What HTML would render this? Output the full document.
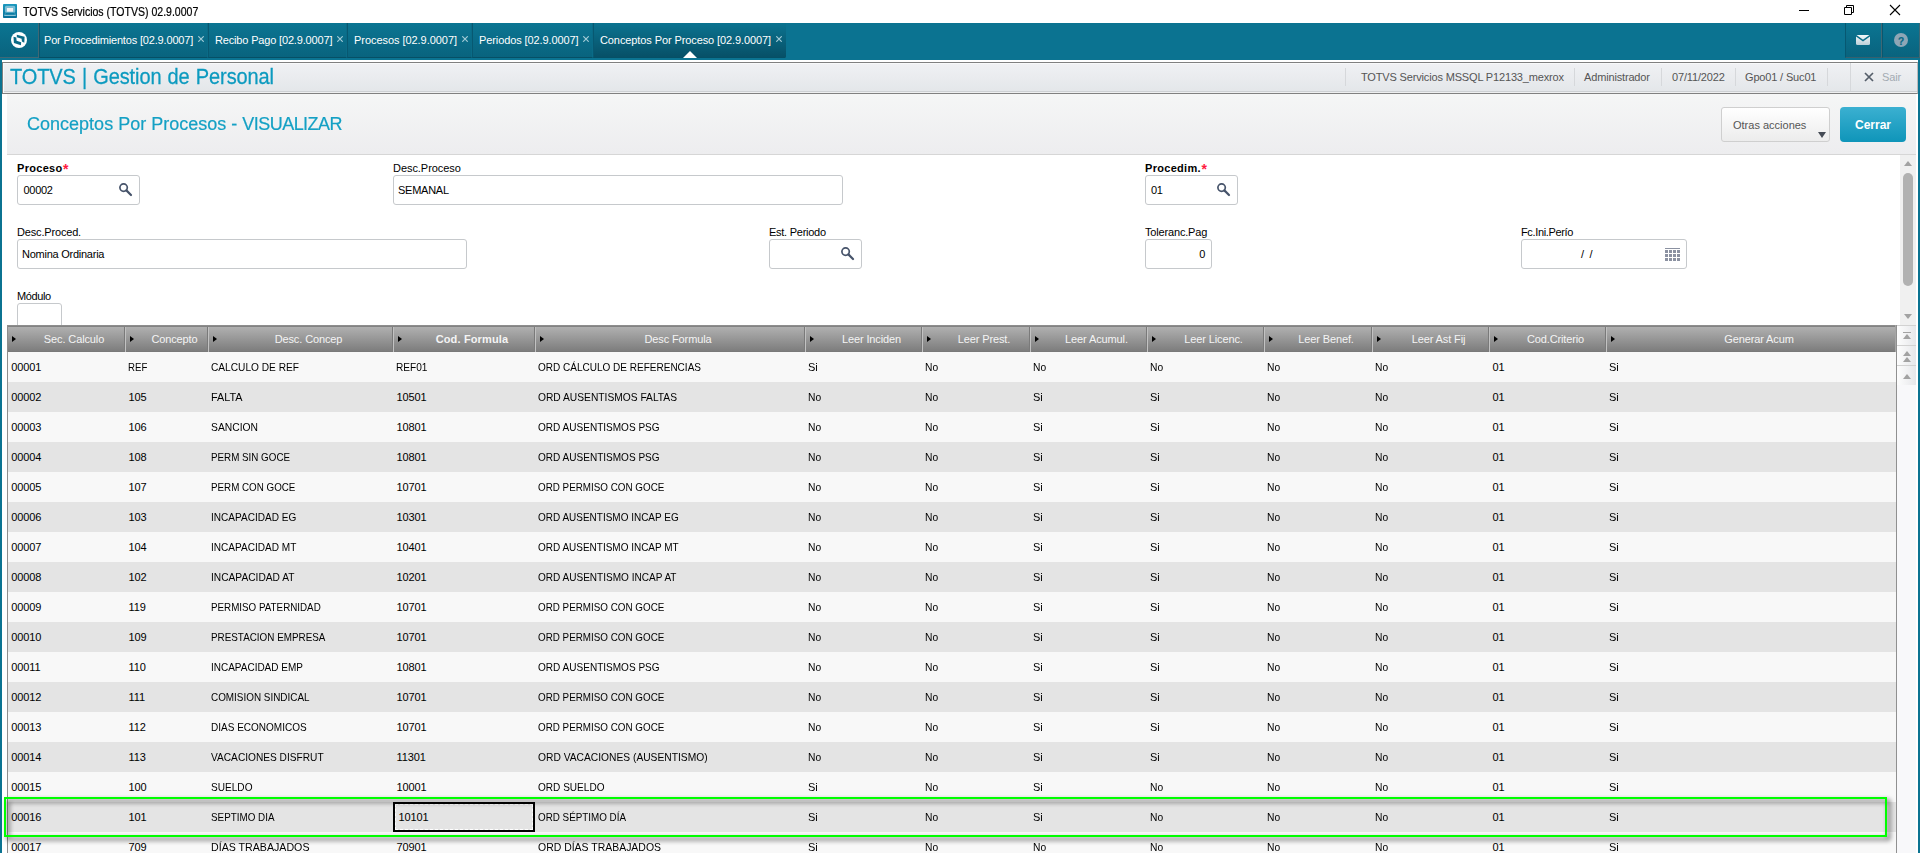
<!DOCTYPE html>
<html><head><meta charset="utf-8"><title>TOTVS</title>
<style>
*{box-sizing:border-box;margin:0;padding:0}
html,body{width:1920px;height:853px;overflow:hidden;background:#fff;font-family:"Liberation Sans",sans-serif;font-size:11px;color:#000}
div,span,i,svg{position:absolute}
#wt{left:23px;top:4px;-webkit-text-stroke:0.2px #000;font-size:12.3px;transform:scaleX(0.857);transform-origin:0 0;line-height:16px;white-space:pre}
#teal{left:0;top:23px;width:1920px;height:830px;background:#0b7391}
#main{left:2px;top:60px;width:1916px;height:793px;background:#fff}
.tab{top:23px;height:35px;background:linear-gradient(#0b7592,#09637e);border-left:1px solid #075871;border-right:1px solid #0a6b87;border-bottom:1px solid #064f65;color:#fff;font-size:11px;line-height:34px;white-space:pre}
.tab span{position:absolute;top:0;letter-spacing:-0.1px}
.tab b{position:absolute;font-weight:normal;color:#a9cdd8;font-size:11px;top:-1px}
.tab.act{background:linear-gradient(#0b7390,#075067);border-right-color:transparent}
#hdr{left:2px;top:62px;width:1916px;height:32px;border:1px solid #808080;border-right-color:#bbb;background:linear-gradient(#f0f1f4,#e3e6e9);box-shadow:inset 1px 1px 0 #f8f9fa}
#hdr:after{content:'';position:absolute;left:1px;right:0;bottom:0;height:2px;background:linear-gradient(#cdd0d3 50%,#eeeff0 50%)}
#hdr .t{left:7px;top:2px;-webkit-text-stroke:0.25px #0c9abf;font-size:20px;line-height:24px;color:#0c9abf;white-space:pre;transform:scaleY(1.07);transform-origin:0 19.5px}
.hs{top:5px;width:1px;height:18px;background:#d6d8db}
.ht{top:8px;font-size:11px;line-height:13px;color:#555;white-space:pre;letter-spacing:-0.16px}
#panel{left:7px;top:94px;width:1909px;height:61px;background:linear-gradient(#f5f6f6,#ededef);border-bottom:1px solid #d6d6d6}
#panel .t{left:20px;top:19px;-webkit-text-stroke:0.2px #14a0c4;font-size:18px;line-height:22px;color:#14a0c4;white-space:pre;letter-spacing:-0.15px;transform:scaleY(1.05);transform-origin:0 17.5px}
#oa{left:1714px;top:13px;width:109px;height:35px;border:1px solid #cfcfcf;border-radius:3px;background:linear-gradient(#fff,#ececec);font-size:11px;color:#555;line-height:33px}
#oa span{left:11px;top:1px}
#oa i{left:96px;top:24px;width:0;height:0;border-left:4.75px solid transparent;border-right:4.75px solid transparent;border-top:6px solid #454b55}
#ce{left:1833px;top:13px;width:66px;height:35px;border-radius:4px;background:linear-gradient(#3bb0d1,#0f95b9);color:#fff;font-weight:bold;font-size:12px;line-height:37px;text-align:center}
.lb{font-size:11px;line-height:13px;white-space:pre;color:#000;letter-spacing:-0.17px}
.lb.b{font-weight:bold;letter-spacing:0.3px}
.lb em{font-style:normal;color:#ff1a40;font-weight:bold;font-size:14px;line-height:0;vertical-align:-1.5px;letter-spacing:0;margin-left:0.5px}
.in{height:30px;border:1px solid #c6c9cc;border-radius:3px;background:#fff;font-size:11px;line-height:28px;white-space:pre}
.in span{top:0;letter-spacing:-0.25px}
#sb{left:1900px;top:155px;width:16px;height:170px;background:#f0f0f0}
#sb .th{left:3px;top:18px;width:10px;height:113px;border-radius:5px;background:#b1b1b1}
.tu{width:0;height:0;border-left:4px solid transparent;border-right:4px solid transparent;border-bottom:5px solid #a2a2a2}
.td{width:0;height:0;border-left:4px solid transparent;border-right:4px solid transparent;border-top:5px solid #a2a2a2}
#grid{left:7px;top:325px;width:1890px;height:528px;border-left:1px solid #8e8e8e;border-right:1px solid #909090;background:#f8f8f8;overflow:hidden}
#gh{left:-1px;top:0;width:1889px;height:27px;border-right:1px solid #a6a6a6;background:linear-gradient(#999 0,#828282 1px,#828282 2px,#b0b0b0 2px,#7d7d7d 26px,#777 27px)}
.hc{top:2px;height:25px;border-left:1px solid #c2c2c2;color:#f4f4f4;font-size:11px;line-height:24px;text-align:center;white-space:pre}
.hc:before{content:"";position:absolute;left:-2px;top:0;width:1px;height:25px;background:#7a7a7a}
.hc i{left:4px;top:9.4px;width:0;height:0;border-top:3.7px solid transparent;border-bottom:3.7px solid transparent;border-left:4.5px solid #000}
.hc span{left:15px;right:0;top:0;letter-spacing:-0.12px}
.hc.b span{font-weight:bold;letter-spacing:0.15px}
.gr{left:-1px;width:1890px;height:30px;background:#f8f8f8;line-height:30px;white-space:pre}
.gr.alt{background:#e4e4e4}
.gr span{top:0;font-size:11px}
.gr .d{letter-spacing:-0.1px}
.gr .u{transform-origin:0 0}
#rb{left:1897px;top:325px;width:19px;height:528px;background:#f8f8fa}
.rbb{left:0;width:19px;background:linear-gradient(90deg,#fdfdfd,#e6e7ea);border-top:1px solid #d2d2d2}
</style></head><body>
<!-- window title bar -->
<svg style="left:3px;top:4px" width="14" height="14" viewBox="0 0 14 14"><defs><linearGradient id="ig" x1="0" y1="0" x2="0" y2="1"><stop offset="0" stop-color="#1a98be"/><stop offset="1" stop-color="#066f98"/></linearGradient></defs><rect x="0" y="0" width="14" height="14" rx="0.8" fill="url(#ig)"/><rect x="2.4" y="2.3" width="9.4" height="6" rx="0.9" fill="#79bdd5" stroke="#9fd0e0" stroke-width="0.6"/><rect x="3.9" y="4" width="6.2" height="3.7" fill="#f1f1f3"/><path d="M2.7 8.4 L11.5 8.4 L12.6 11.3 L1.5 11.3 Z" fill="#0b7da5" stroke="#6fb9d1" stroke-width="0.45" stroke-linejoin="round"/><path d="M1.4 11.4 H12.7" stroke="#b6dbe6" stroke-width="0.8"/></svg>
<div id="wt">TOTVS Servicios (TOTVS) 02.9.0007</div>
<svg style="left:1790px;top:0" width="130" height="23" viewBox="0 0 130 23"><path d="M9 10.5 H19" stroke="#000" stroke-width="1" fill="none"/><path d="M54.5 7.5 H61.5 V14.5 H54.5 Z M56.5 7.5 V5.5 H63.5 V12.5 H61.5" stroke="#000" stroke-width="1" fill="none"/><path d="M100 5 L110 15 M110 5 L100 15" stroke="#000" stroke-width="1.1" fill="none"/></svg>
<div id="teal"></div>
<!-- tabs -->
<div class="tab" style="left:0;width:39px;border-left:none;border-right-color:#3f6875;border-bottom-color:#3f6875"><svg style="left:11px;top:9px" width="16" height="16" viewBox="0 0 16 16"><circle cx="8" cy="8" r="8" fill="#fff"/><path d="M5.8 2.7 L13.6 4.7 L13.3 10.8 L10.9 9.6 L10.6 6.7 L5.8 5.3 Z M2.5 4.8 L5.3 5.6 L5.6 8.8 L10.2 10.3 L9.9 13.3 L2.9 10.9 Z" fill="#0a6b87"/></svg></div>
<div class="tab" style="left:39px;width:169px"><span style="left:4px;letter-spacing:-0.165px">Por Procedimientos [02.9.0007]</span><svg style="left:158px;top:13px" width="6" height="6" viewBox="0 0 6 6"><path d="M0.3 0.3 L5.7 5.7 M5.7 0.3 L0.3 5.7" stroke="#a4ccd7" stroke-width="1.15" fill="none"/></svg></div>
<div class="tab" style="left:208px;width:139px"><span style="left:6px;letter-spacing:-0.165px">Recibo Pago [02.9.0007]</span><svg style="left:128px;top:13px" width="6" height="6" viewBox="0 0 6 6"><path d="M0.3 0.3 L5.7 5.7 M5.7 0.3 L0.3 5.7" stroke="#a4ccd7" stroke-width="1.15" fill="none"/></svg></div>
<div class="tab" style="left:347px;width:125px"><span style="left:6px;letter-spacing:-0.05px">Procesos [02.9.0007]</span><svg style="left:114px;top:13px" width="6" height="6" viewBox="0 0 6 6"><path d="M0.3 0.3 L5.7 5.7 M5.7 0.3 L0.3 5.7" stroke="#a4ccd7" stroke-width="1.15" fill="none"/></svg></div>
<div class="tab" style="left:472px;width:121px"><span style="left:6px">Periodos [02.9.0007]</span><svg style="left:110px;top:13px" width="6" height="6" viewBox="0 0 6 6"><path d="M0.3 0.3 L5.7 5.7 M5.7 0.3 L0.3 5.7" stroke="#a4ccd7" stroke-width="1.15" fill="none"/></svg></div>
<div class="tab act" style="left:593px;width:193px"><span style="left:6px">Conceptos Por Proceso [02.9.0007]</span><svg style="left:182px;top:13px" width="6" height="6" viewBox="0 0 6 6"><path d="M0.3 0.3 L5.7 5.7 M5.7 0.3 L0.3 5.7" stroke="#a4ccd7" stroke-width="1.15" fill="none"/></svg><i style="left:89px;top:28px;width:0;height:0;border-left:7px solid transparent;border-right:7px solid transparent;border-bottom:7px solid #fff"></i></div>
<div class="tab" style="left:1845px;width:37px;border-right-color:#3f6875;border-bottom-color:#36606d"><svg style="left:10px;top:12px" width="14" height="10" viewBox="0 0 14 10"><defs><linearGradient id="mg" x1="0" y1="0" x2="0" y2="1"><stop offset="0" stop-color="#f4f7f9"/><stop offset="1" stop-color="#bccfd8"/></linearGradient></defs><rect x="0" y="0" width="14" height="10" rx="1.5" fill="url(#mg)"/><path d="M0 0.6 L7 5.5 L14 0.6" fill="none" stroke="#0a6c88" stroke-width="1.5"/></svg></div>
<div class="tab" style="left:1882px;width:38px;border-right-color:#3f6875;border-bottom-color:#36606d"><svg style="left:11px;top:10px" width="14" height="14" viewBox="0 0 14 14"><circle cx="7" cy="7" r="7" fill="#8ea6b6"/><text x="7" y="11.9" text-anchor="middle" font-family="Liberation Sans" font-weight="bold" font-size="11.5" fill="#0a6985" stroke="#0a6985" stroke-width="0.2" transform="translate(7 0) scale(0.88 1) translate(-7 0)">?</text></svg></div>
<!-- main -->
<div id="main"></div>
<div id="hdr"><div class="t" style="word-spacing:0.7px;letter-spacing:-0.1px">TOTVS | Gestion de Personal</div>
<div class="hs" style="left:1342px"></div><div class="ht" style="left:1358px">TOTVS Servicios MSSQL P12133_mexrox</div>
<div class="hs" style="left:1571px"></div><div class="ht" style="left:1581px">Administrador</div>
<div class="hs" style="left:1658px"></div><div class="ht" style="left:1669px">07/11/2022</div>
<div class="hs" style="left:1732px"></div><div class="ht" style="left:1742px">Gpo01 / Suc01</div>
<div class="hs" style="left:1824px"></div>
<div class="hs" style="left:1847px;top:0;height:29px"></div>
<svg style="left:1861px;top:8.5px" width="10" height="10" viewBox="0 0 10 10"><path d="M1 1 L9 9 M9 1 L1 9" stroke="#555e6a" stroke-width="1.7" fill="none"/></svg>
<div class="ht" style="left:1879px;color:#a3abb3">Sair</div>
</div>
<div id="panel"><div class="t" style="letter-spacing:0.01px">Conceptos Por Procesos - <span style="position:static;letter-spacing:-0.55px">VISUALIZAR</span></div>
<div id="oa"><span>Otras acciones</span><i></i></div><div id="ce">Cerrar</div></div>
<!-- form -->
<div class="lb b" style="left:17px;top:162px">Proceso<em>*</em></div>
<div class="in" style="left:17px;top:175px;width:123px"><span style="left:5.4px">00002</span><svg class="mag" style="left:100px;top:5.5px" width="15" height="15" viewBox="0 0 15 15"><circle cx="5.6" cy="5.6" r="3.7" fill="none" stroke="#46536a" stroke-width="1.7"/><path d="M8.4 8.4 L13 13" stroke="#46536a" stroke-width="2.2" stroke-linecap="round"/></svg></div>
<div class="lb" style="left:393px;top:162px;letter-spacing:-0.05px">Desc.Proceso</div>
<div class="in" style="left:393px;top:175px;width:450px"><span style="left:4px">SEMANAL</span></div>
<div class="lb b" style="left:1145px;top:162px">Procedim.<em>*</em></div>
<div class="in" style="left:1145px;top:175px;width:93px"><span style="left:5px">01</span><svg class="mag" style="left:70.3px;top:5.5px" width="15" height="15" viewBox="0 0 15 15"><circle cx="5.6" cy="5.6" r="3.7" fill="none" stroke="#46536a" stroke-width="1.7"/><path d="M8.4 8.4 L13 13" stroke="#46536a" stroke-width="2.2" stroke-linecap="round"/></svg></div>
<div class="lb" style="left:17px;top:226px">Desc.Proced.</div>
<div class="in" style="left:17px;top:239px;width:450px"><span style="left:4px">Nomina Ordinaria</span></div>
<div class="lb" style="left:769px;top:226px;letter-spacing:-0.26px">Est. Periodo</div>
<div class="in" style="left:769px;top:239px;width:93px"><svg class="mag" style="left:70.3px;top:5.5px" width="15" height="15" viewBox="0 0 15 15"><circle cx="5.6" cy="5.6" r="3.7" fill="none" stroke="#46536a" stroke-width="1.7"/><path d="M8.4 8.4 L13 13" stroke="#46536a" stroke-width="2.2" stroke-linecap="round"/></svg></div>
<div class="lb" style="left:1145px;top:226px">Toleranc.Pag</div>
<div class="in" style="left:1145px;top:239px;width:67px"><span style="right:6px">0</span></div>
<div class="lb" style="left:1521px;top:226px;letter-spacing:-0.36px">Fc.Ini.Perío</div>
<div class="in" style="left:1521px;top:239px;width:166px"><span style="left:59px">/  /</span><svg style="left:143px;top:8px" width="16" height="14" viewBox="0 0 16 14"><g fill="#8b91a1"><rect x="0" y="0" width="15" height="1"/><rect x="0" y="2" width="3" height="3"/><rect x="4" y="2" width="3" height="3"/><rect x="8" y="2" width="3" height="3"/><rect x="12" y="2" width="3" height="3"/><rect x="0" y="6" width="3" height="3"/><rect x="4" y="6" width="3" height="3"/><rect x="8" y="6" width="3" height="3"/><rect x="12" y="6" width="3" height="3"/><rect x="0" y="10" width="3" height="3"/><rect x="4" y="10" width="3" height="3"/><rect x="8" y="10" width="3" height="3"/><rect x="12" y="10" width="3" height="3"/></g></svg></div>
<div class="lb" style="left:17px;top:290px;letter-spacing:-0.4px">Módulo</div>
<div class="in" style="left:17px;top:303px;width:45px"></div>
<!-- form scrollbar -->
<div id="sb"><i class="tu" style="left:4px;top:6px"></i><div class="th"></div><i class="td" style="left:4px;top:159px"></i></div>
<!-- grid -->
<div id="grid"><div id="gh">
<div class="hc" style="left:0px;width:118px"><i></i><span>Sec. Calculo</span></div>
<div class="hc" style="left:118px;width:83px"><i></i><span>Concepto</span></div>
<div class="hc" style="left:201px;width:185px"><i></i><span>Desc. Concep</span></div>
<div class="hc b" style="left:386px;width:142px"><i></i><span>Cod. Formula</span></div>
<div class="hc" style="left:528px;width:270px"><i></i><span>Desc Formula</span></div>
<div class="hc" style="left:798px;width:117px"><i></i><span>Leer Inciden</span></div>
<div class="hc" style="left:915px;width:108px"><i></i><span>Leer Prest.</span></div>
<div class="hc" style="left:1023px;width:117px"><i></i><span>Leer Acumul.</span></div>
<div class="hc" style="left:1140px;width:117px"><i></i><span>Leer Licenc.</span></div>
<div class="hc" style="left:1257px;width:108px"><i></i><span>Leer Benef.</span></div>
<div class="hc" style="left:1365px;width:117px"><i></i><span>Leer Ast Fij</span></div>
<div class="hc" style="left:1482px;width:117px"><i></i><span>Cod.Criterio</span></div>
<div class="hc" style="left:1599px;width:290px"><i></i><span>Generar Acum</span></div>
</div>
<div class="gr" style="top:27px"><span class="d" style="left:4.2px">00001</span><span class="u" style="left:121px;transform:scaleX(0.8773)">REF</span><span class="u" style="left:204px;transform:scaleX(0.9228)">CALCULO DE REF</span><span class="u" style="left:389px;transform:scaleX(0.9197)">REF01</span><span class="u" style="left:531px;transform:scaleX(0.9101)">ORD CÁLCULO DE REFERENCIAS</span><span class="u" style="left:801px;transform:scaleX(1.0019)">Si</span><span class="u" style="left:918px;transform:scaleX(0.9316)">No</span><span class="u" style="left:1026px;transform:scaleX(0.9316)">No</span><span class="u" style="left:1143px;transform:scaleX(0.9316)">No</span><span class="u" style="left:1260px;transform:scaleX(0.9316)">No</span><span class="u" style="left:1368px;transform:scaleX(0.9316)">No</span><span class="d" style="left:1485.5px">01</span><span class="u" style="left:1602px;transform:scaleX(1.0019)">Si</span></div>
<div class="gr alt" style="top:57px"><span class="d" style="left:4.2px">00002</span><span class="d" style="left:121.5px">105</span><span class="u" style="left:204px;transform:scaleX(0.9844)">FALTA</span><span class="d" style="left:389.5px">10501</span><span class="u" style="left:531px;transform:scaleX(0.9307)">ORD AUSENTISMOS FALTAS</span><span class="u" style="left:801px;transform:scaleX(0.9316)">No</span><span class="u" style="left:918px;transform:scaleX(0.9316)">No</span><span class="u" style="left:1026px;transform:scaleX(1.0019)">Si</span><span class="u" style="left:1143px;transform:scaleX(1.0019)">Si</span><span class="u" style="left:1260px;transform:scaleX(0.9316)">No</span><span class="u" style="left:1368px;transform:scaleX(0.9316)">No</span><span class="d" style="left:1485.5px">01</span><span class="u" style="left:1602px;transform:scaleX(1.0019)">Si</span></div>
<div class="gr" style="top:87px"><span class="d" style="left:4.2px">00003</span><span class="d" style="left:121.5px">106</span><span class="u" style="left:204px;transform:scaleX(0.9377)">SANCION</span><span class="d" style="left:389.5px">10801</span><span class="u" style="left:531px;transform:scaleX(0.9126)">ORD AUSENTISMOS PSG</span><span class="u" style="left:801px;transform:scaleX(0.9316)">No</span><span class="u" style="left:918px;transform:scaleX(0.9316)">No</span><span class="u" style="left:1026px;transform:scaleX(1.0019)">Si</span><span class="u" style="left:1143px;transform:scaleX(1.0019)">Si</span><span class="u" style="left:1260px;transform:scaleX(0.9316)">No</span><span class="u" style="left:1368px;transform:scaleX(0.9316)">No</span><span class="d" style="left:1485.5px">01</span><span class="u" style="left:1602px;transform:scaleX(1.0019)">Si</span></div>
<div class="gr alt" style="top:117px"><span class="d" style="left:4.2px">00004</span><span class="d" style="left:121.5px">108</span><span class="u" style="left:204px;transform:scaleX(0.8914)">PERM SIN GOCE</span><span class="d" style="left:389.5px">10801</span><span class="u" style="left:531px;transform:scaleX(0.9126)">ORD AUSENTISMOS PSG</span><span class="u" style="left:801px;transform:scaleX(0.9316)">No</span><span class="u" style="left:918px;transform:scaleX(0.9316)">No</span><span class="u" style="left:1026px;transform:scaleX(1.0019)">Si</span><span class="u" style="left:1143px;transform:scaleX(1.0019)">Si</span><span class="u" style="left:1260px;transform:scaleX(0.9316)">No</span><span class="u" style="left:1368px;transform:scaleX(0.9316)">No</span><span class="d" style="left:1485.5px">01</span><span class="u" style="left:1602px;transform:scaleX(1.0019)">Si</span></div>
<div class="gr" style="top:147px"><span class="d" style="left:4.2px">00005</span><span class="d" style="left:121.5px">107</span><span class="u" style="left:204px;transform:scaleX(0.8909)">PERM CON GOCE</span><span class="d" style="left:389.5px">10701</span><span class="u" style="left:531px;transform:scaleX(0.8946)">ORD PERMISO CON GOCE</span><span class="u" style="left:801px;transform:scaleX(0.9316)">No</span><span class="u" style="left:918px;transform:scaleX(0.9316)">No</span><span class="u" style="left:1026px;transform:scaleX(1.0019)">Si</span><span class="u" style="left:1143px;transform:scaleX(1.0019)">Si</span><span class="u" style="left:1260px;transform:scaleX(0.9316)">No</span><span class="u" style="left:1368px;transform:scaleX(0.9316)">No</span><span class="d" style="left:1485.5px">01</span><span class="u" style="left:1602px;transform:scaleX(1.0019)">Si</span></div>
<div class="gr alt" style="top:177px"><span class="d" style="left:4.2px">00006</span><span class="d" style="left:121.5px">103</span><span class="u" style="left:204px;transform:scaleX(0.9152)">INCAPACIDAD EG</span><span class="d" style="left:389.5px">10301</span><span class="u" style="left:531px;transform:scaleX(0.9074)">ORD AUSENTISMO INCAP EG</span><span class="u" style="left:801px;transform:scaleX(0.9316)">No</span><span class="u" style="left:918px;transform:scaleX(0.9316)">No</span><span class="u" style="left:1026px;transform:scaleX(1.0019)">Si</span><span class="u" style="left:1143px;transform:scaleX(1.0019)">Si</span><span class="u" style="left:1260px;transform:scaleX(0.9316)">No</span><span class="u" style="left:1368px;transform:scaleX(0.9316)">No</span><span class="d" style="left:1485.5px">01</span><span class="u" style="left:1602px;transform:scaleX(1.0019)">Si</span></div>
<div class="gr" style="top:207px"><span class="d" style="left:4.2px">00007</span><span class="d" style="left:121.5px">104</span><span class="u" style="left:204px;transform:scaleX(0.9152)">INCAPACIDAD MT</span><span class="d" style="left:389.5px">10401</span><span class="u" style="left:531px;transform:scaleX(0.9075)">ORD AUSENTISMO INCAP MT</span><span class="u" style="left:801px;transform:scaleX(0.9316)">No</span><span class="u" style="left:918px;transform:scaleX(0.9316)">No</span><span class="u" style="left:1026px;transform:scaleX(1.0019)">Si</span><span class="u" style="left:1143px;transform:scaleX(1.0019)">Si</span><span class="u" style="left:1260px;transform:scaleX(0.9316)">No</span><span class="u" style="left:1368px;transform:scaleX(0.9316)">No</span><span class="d" style="left:1485.5px">01</span><span class="u" style="left:1602px;transform:scaleX(1.0019)">Si</span></div>
<div class="gr alt" style="top:237px"><span class="d" style="left:4.2px">00008</span><span class="d" style="left:121.5px">102</span><span class="u" style="left:204px;transform:scaleX(0.9271)">INCAPACIDAD AT</span><span class="d" style="left:389.5px">10201</span><span class="u" style="left:531px;transform:scaleX(0.9124)">ORD AUSENTISMO INCAP AT</span><span class="u" style="left:801px;transform:scaleX(0.9316)">No</span><span class="u" style="left:918px;transform:scaleX(0.9316)">No</span><span class="u" style="left:1026px;transform:scaleX(1.0019)">Si</span><span class="u" style="left:1143px;transform:scaleX(1.0019)">Si</span><span class="u" style="left:1260px;transform:scaleX(0.9316)">No</span><span class="u" style="left:1368px;transform:scaleX(0.9316)">No</span><span class="d" style="left:1485.5px">01</span><span class="u" style="left:1602px;transform:scaleX(1.0019)">Si</span></div>
<div class="gr" style="top:267px"><span class="d" style="left:4.2px">00009</span><span class="d" style="left:121.5px">119</span><span class="u" style="left:204px;transform:scaleX(0.8918)">PERMISO PATERNIDAD</span><span class="d" style="left:389.5px">10701</span><span class="u" style="left:531px;transform:scaleX(0.8946)">ORD PERMISO CON GOCE</span><span class="u" style="left:801px;transform:scaleX(0.9316)">No</span><span class="u" style="left:918px;transform:scaleX(0.9316)">No</span><span class="u" style="left:1026px;transform:scaleX(1.0019)">Si</span><span class="u" style="left:1143px;transform:scaleX(1.0019)">Si</span><span class="u" style="left:1260px;transform:scaleX(0.9316)">No</span><span class="u" style="left:1368px;transform:scaleX(0.9316)">No</span><span class="d" style="left:1485.5px">01</span><span class="u" style="left:1602px;transform:scaleX(1.0019)">Si</span></div>
<div class="gr alt" style="top:297px"><span class="d" style="left:4.2px">00010</span><span class="d" style="left:121.5px">109</span><span class="u" style="left:204px;transform:scaleX(0.8969)">PRESTACION EMPRESA</span><span class="d" style="left:389.5px">10701</span><span class="u" style="left:531px;transform:scaleX(0.8946)">ORD PERMISO CON GOCE</span><span class="u" style="left:801px;transform:scaleX(0.9316)">No</span><span class="u" style="left:918px;transform:scaleX(0.9316)">No</span><span class="u" style="left:1026px;transform:scaleX(1.0019)">Si</span><span class="u" style="left:1143px;transform:scaleX(1.0019)">Si</span><span class="u" style="left:1260px;transform:scaleX(0.9316)">No</span><span class="u" style="left:1368px;transform:scaleX(0.9316)">No</span><span class="d" style="left:1485.5px">01</span><span class="u" style="left:1602px;transform:scaleX(1.0019)">Si</span></div>
<div class="gr" style="top:327px"><span class="d" style="left:4.2px">00011</span><span class="d" style="left:121.5px">110</span><span class="u" style="left:204px;transform:scaleX(0.9075)">INCAPACIDAD EMP</span><span class="d" style="left:389.5px">10801</span><span class="u" style="left:531px;transform:scaleX(0.9126)">ORD AUSENTISMOS PSG</span><span class="u" style="left:801px;transform:scaleX(0.9316)">No</span><span class="u" style="left:918px;transform:scaleX(0.9316)">No</span><span class="u" style="left:1026px;transform:scaleX(1.0019)">Si</span><span class="u" style="left:1143px;transform:scaleX(1.0019)">Si</span><span class="u" style="left:1260px;transform:scaleX(0.9316)">No</span><span class="u" style="left:1368px;transform:scaleX(0.9316)">No</span><span class="d" style="left:1485.5px">01</span><span class="u" style="left:1602px;transform:scaleX(1.0019)">Si</span></div>
<div class="gr alt" style="top:357px"><span class="d" style="left:4.2px">00012</span><span class="d" style="left:121.5px">111</span><span class="u" style="left:204px;transform:scaleX(0.9003)">COMISION SINDICAL</span><span class="d" style="left:389.5px">10701</span><span class="u" style="left:531px;transform:scaleX(0.8946)">ORD PERMISO CON GOCE</span><span class="u" style="left:801px;transform:scaleX(0.9316)">No</span><span class="u" style="left:918px;transform:scaleX(0.9316)">No</span><span class="u" style="left:1026px;transform:scaleX(1.0019)">Si</span><span class="u" style="left:1143px;transform:scaleX(1.0019)">Si</span><span class="u" style="left:1260px;transform:scaleX(0.9316)">No</span><span class="u" style="left:1368px;transform:scaleX(0.9316)">No</span><span class="d" style="left:1485.5px">01</span><span class="u" style="left:1602px;transform:scaleX(1.0019)">Si</span></div>
<div class="gr" style="top:387px"><span class="d" style="left:4.2px">00013</span><span class="d" style="left:121.5px">112</span><span class="u" style="left:204px;transform:scaleX(0.9103)">DIAS ECONOMICOS</span><span class="d" style="left:389.5px">10701</span><span class="u" style="left:531px;transform:scaleX(0.8946)">ORD PERMISO CON GOCE</span><span class="u" style="left:801px;transform:scaleX(0.9316)">No</span><span class="u" style="left:918px;transform:scaleX(0.9316)">No</span><span class="u" style="left:1026px;transform:scaleX(1.0019)">Si</span><span class="u" style="left:1143px;transform:scaleX(1.0019)">Si</span><span class="u" style="left:1260px;transform:scaleX(0.9316)">No</span><span class="u" style="left:1368px;transform:scaleX(0.9316)">No</span><span class="d" style="left:1485.5px">01</span><span class="u" style="left:1602px;transform:scaleX(1.0019)">Si</span></div>
<div class="gr alt" style="top:417px"><span class="d" style="left:4.2px">00014</span><span class="d" style="left:121.5px">113</span><span class="u" style="left:204px;transform:scaleX(0.9227)">VACACIONES DISFRUT</span><span class="d" style="left:389.5px">11301</span><span class="u" style="left:531px;transform:scaleX(0.9322)">ORD VACACIONES (AUSENTISMO)</span><span class="u" style="left:801px;transform:scaleX(0.9316)">No</span><span class="u" style="left:918px;transform:scaleX(0.9316)">No</span><span class="u" style="left:1026px;transform:scaleX(1.0019)">Si</span><span class="u" style="left:1143px;transform:scaleX(1.0019)">Si</span><span class="u" style="left:1260px;transform:scaleX(0.9316)">No</span><span class="u" style="left:1368px;transform:scaleX(0.9316)">No</span><span class="d" style="left:1485.5px">01</span><span class="u" style="left:1602px;transform:scaleX(1.0019)">Si</span></div>
<div class="gr" style="top:447px"><span class="d" style="left:4.2px">00015</span><span class="d" style="left:121.5px">100</span><span class="u" style="left:204px;transform:scaleX(0.9171)">SUELDO</span><span class="d" style="left:389.5px">10001</span><span class="u" style="left:531px;transform:scaleX(0.9141)">ORD SUELDO</span><span class="u" style="left:801px;transform:scaleX(1.0019)">Si</span><span class="u" style="left:918px;transform:scaleX(0.9316)">No</span><span class="u" style="left:1026px;transform:scaleX(1.0019)">Si</span><span class="u" style="left:1143px;transform:scaleX(0.9316)">No</span><span class="u" style="left:1260px;transform:scaleX(0.9316)">No</span><span class="u" style="left:1368px;transform:scaleX(0.9316)">No</span><span class="d" style="left:1485.5px">01</span><span class="u" style="left:1602px;transform:scaleX(1.0019)">Si</span></div>
<div class="gr alt" style="top:477px"><span class="d" style="left:4.2px">00016</span><span class="d" style="left:121.5px">101</span><span class="u" style="left:204px;transform:scaleX(0.8955)">SEPTIMO DIA</span><span class="d" style="left:391.5px">10101</span><span class="u" style="left:531px;transform:scaleX(0.8943)">ORD SÉPTIMO DÍA</span><span class="u" style="left:801px;transform:scaleX(1.0019)">Si</span><span class="u" style="left:918px;transform:scaleX(0.9316)">No</span><span class="u" style="left:1026px;transform:scaleX(1.0019)">Si</span><span class="u" style="left:1143px;transform:scaleX(0.9316)">No</span><span class="u" style="left:1260px;transform:scaleX(0.9316)">No</span><span class="u" style="left:1368px;transform:scaleX(0.9316)">No</span><span class="d" style="left:1485.5px">01</span><span class="u" style="left:1602px;transform:scaleX(1.0019)">Si</span></div>
<div class="gr" style="top:507px"><span class="d" style="left:4.2px">00017</span><span class="d" style="left:121.5px">709</span><span class="u" style="left:204px;transform:scaleX(0.9667)">DÍAS TRABAJADOS</span><span class="d" style="left:389.5px">70901</span><span class="u" style="left:531px;transform:scaleX(0.9506)">ORD DÍAS TRABAJADOS</span><span class="u" style="left:801px;transform:scaleX(1.0019)">Si</span><span class="u" style="left:918px;transform:scaleX(0.9316)">No</span><span class="u" style="left:1026px;transform:scaleX(0.9316)">No</span><span class="u" style="left:1143px;transform:scaleX(0.9316)">No</span><span class="u" style="left:1260px;transform:scaleX(0.9316)">No</span><span class="u" style="left:1368px;transform:scaleX(0.9316)">No</span><span class="d" style="left:1485.5px">01</span><span class="u" style="left:1602px;transform:scaleX(1.0019)">Si</span></div>
<div style="left:385px;top:477px;width:142px;height:30px;border:2px solid #000"><div style="left:0;top:0;right:0;bottom:0;border:1px dashed #fff"></div></div>
</div>
<div id="rb"><div class="rbb" style="top:0;height:20px"><i style="left:6px;top:6px;width:8px;height:1px;background:#a2a2a2"></i><i class="tu" style="left:6px;top:8px"></i></div><div class="rbb" style="top:20px;height:20px"><i class="tu" style="left:6px;top:5px"></i><i class="tu" style="left:6px;top:11px"></i></div><div class="rbb" style="top:40px;height:20px"><i class="tu" style="left:6px;top:8px"></i></div></div>
<!-- green highlight -->
<div style="left:4px;top:797px;width:1883px;height:40px;border:2px solid #00ff00;filter:drop-shadow(3px 3px 2.5px rgba(0,0,0,0.75))"></div>
</body></html>
